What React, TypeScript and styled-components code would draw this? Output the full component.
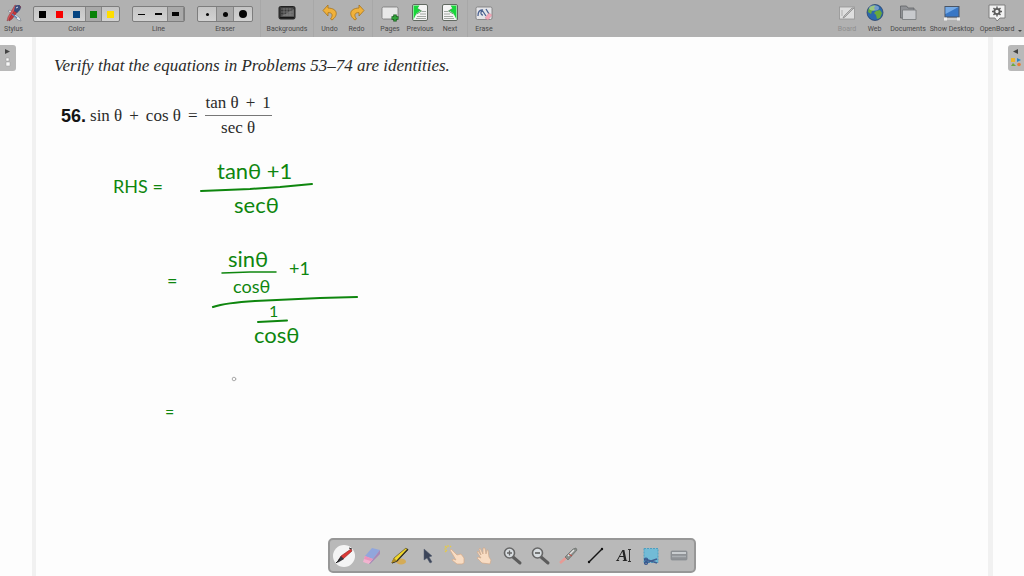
import React from "react";
import styled, { createGlobalStyle } from "styled-components";

const GlobalStyle = createGlobalStyle`
  * { box-sizing: border-box; }
  body { margin: 0; background: #fdfdfd; font-family: Roboto, "Liberation Sans", sans-serif; }
  button { font: inherit; color: inherit; margin: 0; padding: 0; border: 0; background: none; cursor: pointer; }
`;

const Screen = styled.div`
  min-height: 100vh;
  display: flex;
  flex-direction: column;
`;

const Toolbar = styled.header`
  height: 37px;
  display: flex;
  justify-content: space-between;
  background: #b1b1b1;
  color: #4a4a4a;
  font-size: 7px;
  line-height: 10px;
`;

const ToolGroup = styled.div<{ $end?: number }>`
  display: flex;
  padding-right: ${(p) => p.$end ?? 0}px;
  position: relative;
`;

const Section = styled.div`
  display: flex;
  padding: 0 2px;
  border-left: 1px solid #a8a8a8;
`;

const ToolButton = styled.button<{ $width: number; $faded?: boolean }>`
  width: ${(p) => p.$width}px;
  height: 37px;
  padding-top: 3px;
  display: flex;
  flex-direction: column;
  align-items: center;
  gap: 1px;
  white-space: nowrap;
  color: ${(p) => (p.$faded ? "#8f8f8f" : "#4a4a4a")};
  svg { display: block; flex: none; }
`;

const Pickers = styled.div`
  display: flex;
  gap: 12px;
  padding: 6px 7px 0 6px;
`;

const Picker = styled.div`
  display: flex;
  flex-direction: column;
  align-items: center;
  gap: 2px;
`;

const Segments = styled.div`
  display: flex;
  height: 16px;
  border: 1px solid #7d7d7d;
  border-radius: 2px;
  background: linear-gradient(#c4c4c4, #d2d2d2);
  overflow: hidden;
`;

const Segment = styled.button<{ $on?: boolean; $width: number }>`
  width: ${(p) => p.$width}px;
  display: flex;
  align-items: center;
  justify-content: center;
  background: ${(p) => (p.$on ? "#a9a9a9" : "transparent")};
  box-shadow: ${(p) => (p.$on ? "inset 1px 0 #858585, inset -1px 0 #858585" : "none")};
`;

const Mark = styled.span<{ $w: number; $h: number; $color?: string; $round?: boolean }>`
  width: ${(p) => p.$w}px;
  height: ${(p) => p.$h}px;
  background: ${(p) => p.$color ?? "#050505"};
  border-radius: ${(p) => (p.$round ? "50%" : "0")};
`;

const MenuArrow = styled.span`
  position: absolute;
  right: 2px;
  bottom: 5px;
  border: 2px solid transparent;
  border-top-color: #444;
  border-bottom: 0;
`;

const Board = styled.main`
  flex: 1;
  position: relative;
  display: flex;
  padding: 0 31px 0 32px;
`;

const Page = styled.article`
  flex: 1;
  border: solid #f1f1f1;
  border-width: 0 5px 0 4px;
  padding: 17px 18px 80px;
  font-family: "Liberation Serif", serif;
  font-size: 17px;
  line-height: 24px;
  color: #2b2b2b;
`;

const Instruction = styled.p`
  margin: 0;
  font-style: italic;
`;

const Problem = styled.div`
  display: flex;
  align-items: center;
  gap: 4px;
  margin-top: 13px;
  padding-left: 7px;
  white-space: nowrap;
`;

const ProblemNumber = styled.b`
  font-family: "Liberation Sans", sans-serif;
  font-size: 18px;
  color: #151515;
`;

const Terms = styled.span`
  display: flex;
  align-items: center;
  gap: 7px;
`;

const Fraction = styled.span`
  display: flex;
  flex-direction: column;
  text-align: center;
`;

const Numerator = styled(Terms)`
  padding: 0 1px;
  border-bottom: 1px solid #777;
`;

const SideTab = styled.button<{ $side: "left" | "right" }>`
  position: absolute;
  top: 8px;
  ${(p) => p.$side}: 0;
  width: 16px;
  height: 26px;
  background: #b9b9b9;
  border-radius: ${(p) => (p.$side === "left" ? "0 3px 3px 0" : "3px 0 0 3px")};
  svg { display: block; }
`;

const Ink = styled.span<{ $x: number; $y: number; $size: number }>`
  position: absolute;
  left: ${(p) => p.$x}px;
  top: ${(p) => p.$y}px;
  font-family: Lato, sans-serif;
  font-size: ${(p) => p.$size}px;
  line-height: 24px;
  color: #0e860e;
  white-space: pre;
`;

const Strokes = styled.svg`
  position: absolute;
  left: 0;
  top: 0;
  pointer-events: none;
`;

const Palette = styled.nav`
  position: fixed;
  bottom: 3px;
  left: 50%;
  transform: translateX(-50%);
  display: flex;
  height: 35px;
  border: 2px solid #979797;
  border-radius: 5px;
  background: #b9b9b9;
`;

const PaletteButton = styled.button<{ $on?: boolean }>`
  width: 28px;
  display: flex;
  align-items: center;
  justify-content: center;
  svg { display: block; border-radius: 50%; background: ${(p) => (p.$on ? "#f4f4f4" : "none")}; overflow: visible; }
`;

const Icon = ({ children }: { children: React.ReactNode }) => (
  <svg width="20" height="20" viewBox="0 0 20 20" fill="none" aria-hidden="true">{children}</svg>
);

const icons = {
  stylus: (
    <Icon>
      <path d="M4 8l2-1 10 8 1 3-3-1z" fill="#e3e8ef" stroke="#7c8590" strokeWidth=".7" />
      <path d="M11 2l2 1-7 13-3 2 1-4z" fill="#d8575a" stroke="#8a3a40" strokeWidth=".5" />
      <path d="M15 2l2 2-9 12-3 2 1-4z" fill="#c5353a" stroke="#7d2b31" strokeWidth=".5" />
      <path d="M11 3c4-2.500 7 0 5 4l-3 3-3-2z" fill="#3b4d7c" />
      <path d="M12 5l2-1" stroke="#d5dcec" />
      <path d="M8 11l5 4" stroke="#5b86b8" strokeWidth="1.500" />
    </Icon>
  ),
  backgrounds: (
    <Icon>
      <rect x="2" y="3.500" width="16" height="12.500" rx="1.500" fill="#3b3b3b" stroke="#222" />
      <path d="M3 14L17 6v8z" fill="#6a6a6a" />
      <path d="M4 6h12M4 9h12M4 12h12M7 5v8M10 5v8M13 5v8" stroke="#898989" strokeWidth=".6" />
      <path d="M3 14.500h14" stroke="#161616" strokeWidth="1.500" />
    </Icon>
  ),
  undo: (
    <Icon>
      <path d="M8 2L3 7.500 8 13V9.700c4-.4 5.500 2.300 2.500 6.300l1.500 1c6-4 6.500-11.500-4-12z" fill="#f0b13b" stroke="#a77319" strokeWidth=".8" strokeLinejoin="round" />
    </Icon>
  ),
  redo: (
    <Icon>
      <path d="M12 2l5 5.500-5 5.500V9.700c-4-.4-5.500 2.300-2.500 6.300L8 17C2 13 1.500 5.500 12 5z" fill="#f0b13b" stroke="#a77319" strokeWidth=".8" strokeLinejoin="round" />
    </Icon>
  ),
  pages: (
    <Icon>
      <rect x="2" y="4" width="16" height="12" rx="1.500" fill="#e8e8e8" stroke="#777" strokeWidth=".8" />
      <path d="M15 11.500v7M11.500 15h7" stroke="#135c18" strokeWidth="3.400" />
      <path d="M15 12.200v5.600M12.200 15h5.600" stroke="#31a33a" strokeWidth="1.800" />
    </Icon>
  ),
  previous: (
    <Icon>
      <rect x="2.500" y="1.500" width="15" height="16" rx="1.500" fill="#f4f4f4" stroke="#606860" />
      <path d="M3.500 2.500h6l-2 3 3 2-4 3-3 6z" fill="#18d63a" />
      <path d="M7.500 5.500l4 2.500-5 3" stroke="#3d8048" strokeWidth=".8" />
      <path d="M12 8.500h4M10 11h6M7 13.500h9M6 15.500h10" stroke="#8d948d" strokeWidth=".8" />
    </Icon>
  ),
  next: (
    <Icon>
      <rect x="2.500" y="1.500" width="15" height="16" rx="1.500" fill="#f4f4f4" stroke="#606860" />
      <path d="M16.500 2.500h-6l2 3-3 2 4 3 3 6z" fill="#18d63a" />
      <path d="M12.500 5.500l-4 2.500 5 3" stroke="#3d8048" strokeWidth=".8" />
      <path d="M4 8.500h4M4 11h6M4 13.500h9M4 15.500h10" stroke="#8d948d" strokeWidth=".8" />
    </Icon>
  ),
  erase: (
    <Icon>
      <rect x="2" y="4" width="16" height="12.500" rx="1.500" fill="#e5e5e8" stroke="#777" strokeWidth=".8" />
      <path d="M4 13c0-4 2-6 4-6-2 3-1 5 1 5M8 7l4 6M12 6l3 5" stroke="#4a6190" strokeWidth="1.300" />
      <path d="M11 15l4-5 3 2-4 5z" fill="#f4a7b8" stroke="#c88292" strokeWidth=".4" />
    </Icon>
  ),
  board: (
    <Icon>
      <rect x="2.500" y="4" width="15" height="12" fill="#dedede" stroke="#949494" strokeWidth=".8" />
      <path d="M5 7v6" stroke="#b0b0b0" />
      <path d="M17 5L8 14l-2 1 1-2 8-8z" fill="#bcbcbc" stroke="#858585" strokeWidth=".7" />
    </Icon>
  ),
  web: (
    <Icon>
      <circle cx="10" cy="9.500" r="8" fill="#2c67ad" stroke="#213b62" strokeWidth=".7" />
      <path d="M3.500 6c2-3 5-4 7-3.500L9 5l1 2-3 1-1 3-3-2zM11 8l4-1 2 3-2 5-3 1-1-4-2-2z" fill="#68a83c" />
      <ellipse cx="9" cy="5" rx="5" ry="2.800" fill="#fff" opacity=".35" />
    </Icon>
  ),
  documents: (
    <Icon>
      <path d="M2.500 3h6l1.500 2h6v10H2.500z" fill="#909296" stroke="#606266" strokeWidth=".8" />
      <path d="M4.500 7h13.500v9.500H4.500z" fill="#c8cacd" stroke="#74777a" strokeWidth=".8" />
    </Icon>
  ),
  desktop: (
    <Icon>
      <rect x="3" y="3.500" width="14" height="10.500" fill="#3977c5" stroke="#4a5564" />
      <path d="M3.500 4h13L3.500 11z" fill="#76aae5" />
      <path d="M2 14.500h3v3H2zM15 14.500h3v3h-3zM5 15.500h10v1H5z" fill="#f0f0f0" />
    </Icon>
  ),
  openboard: (
    <Icon>
      <path d="M2 2h16v13h-5l-3 3-2-3H2z" fill="#f2f2f2" stroke="#777" strokeWidth=".9" />
      <circle cx="10" cy="8.500" r="2.600" stroke="#5a5a5a" strokeWidth="1.800" />
      <path d="M10 3.500v2M10 11.500v2M5 8.500h2M13 8.500h2M6.500 5l1.400 1.400M12.100 10.600l1.400 1.400M6.500 12l1.400-1.400M12.100 6.400L13.500 5" stroke="#5a5a5a" strokeWidth="1.400" />
    </Icon>
  ),
};

const PIcon = ({ children }: { children: React.ReactNode }) => (
  <svg width="22" height="22" viewBox="0 0 22 22" fill="none" aria-hidden="true">{children}</svg>
);

const lens = (
  <>
    <path d="M12 12l7 6" stroke="#5c5c5c" strokeWidth="3" strokeLinecap="round" />
    <circle cx="8.500" cy="8" r="5" fill="#d8dde0" stroke="#666" strokeWidth="1.600" />
  </>
);

const paletteTools: { name: string; art: React.ReactNode }[] = [
  { name: "Pen", art: (
    <PIcon>
      <path d="M18 4l1 2-9 8-4 1 2-4z" fill="#dc3935" stroke="#872120" strokeWidth=".6" />
      <path d="M8 11l3 3-5 3-2 1 1-3z" fill="#38383e" />
      <path d="M3 18l4-4" stroke="#202020" /><path d="M16 3l3 1" stroke="#333" />
    </PIcon>
  ) },
  { name: "Eraser", art: (
    <PIcon>
      <path d="M4 11l8 3-4 5-6-2z" fill="#f2b3cf" />
      <path d="M11 3l8 2-7 9-8-3z" fill="#91a6dc" />
      <path d="M19 5v4L9 19l-1 0 4-5z" fill="#a888b8" />
      <path d="M4 11l8 3-2 2-7-2z" fill="#ea93bb" />
    </PIcon>
  ) },
  { name: "Highlighter", art: (
    <PIcon>
      <ellipse cx="12" cy="16.500" rx="5" ry="3" fill="#dda735" opacity=".75" />
      <path d="M17 3l2 2L8 16l-5 2 2-5z" fill="#f1d72b" stroke="#5a5022" strokeWidth=".7" />
      <path d="M19 4L8 16l-5 2" stroke="#33302a" strokeWidth="1.300" />
      <path d="M2 18l3-5 3 3z" fill="#b08c20" />
    </PIcon>
  ) },
  { name: "Select", art: <PIcon><path d="M7 4l8 7-3 1 3 5-2 1-3-5-3 2z" fill="#3c4559" stroke="#555f71" strokeWidth=".5" /></PIcon> },
  { name: "Interact", art: (
    <PIcon>
      <path d="M5 5l1-1 6 6 4-1 3 4v5l-2 1h-5l-5-4 1-1 3 1z" fill="#f8dcc3" stroke="#d5aa88" strokeWidth=".7" strokeLinejoin="round" />
      <path d="M3 0v2M-1 4h2M0 1l2 2M6 1L5 2M0 7l2-2" stroke="#e5ca48" strokeWidth="1.200" />
    </PIcon>
  ) },
  { name: "Move", art: (
    <PIcon>
      <path d="M9 18l-5-5 1-1 3 1-4-6 1-1 3 4-2-6 1-1 3 6V3h2l1 6 1-4h1l1 7 2 3-1 4z" fill="#f8dcc3" stroke="#d0a98b" strokeWidth=".7" strokeLinejoin="round" />
    </PIcon>
  ) },
  { name: "Zoom in", art: <PIcon>{lens}<path d="M6 8h5M8.500 5.500v5" stroke="#666" strokeWidth="1.300" /></PIcon> },
  { name: "Zoom out", art: <PIcon>{lens}<path d="M6 8h5" stroke="#555" strokeWidth="1.500" /></PIcon> },
  { name: "Laser pointer", art: (
    <PIcon>
      <path d="M3 18l7-6" stroke="#e79b95" strokeWidth="2.600" />
      <path d="M8 12l8-8 3-1 1 2-9 10z" fill="#8a8f8b" stroke="#5f6462" strokeWidth=".6" />
      <path d="M11 11l6-6" stroke="#e4e4e4" strokeWidth="1.500" />
      <path d="M12 9l3 2" stroke="#c34039" />
    </PIcon>
  ) },
  { name: "Line", art: <PIcon><path d="M4 17L17 4" stroke="#151515" strokeWidth="1.400" /><circle cx="4" cy="17" r="1.200" fill="#111" /><circle cx="17" cy="4" r="1.200" fill="#111" /></PIcon> },
  { name: "Text", art: null },
  { name: "Capture", art: (
    <PIcon>
      <rect x="3" y="3.500" width="14" height="14" fill="#72bbd6" stroke="#4e9fc0" strokeDasharray="2 1" />
      <path d="M4 14l12 4M4 18l12-4" stroke="#425f91" strokeWidth="1.500" />
      <circle cx="5" cy="14.500" r="1.500" stroke="#34558c" strokeWidth="1.200" /><circle cx="5" cy="18" r="1.500" stroke="#34558c" strokeWidth="1.200" />
    </PIcon>
  ) },
  { name: "Virtual keyboard", art: (
    <PIcon>
      <rect x="2" y="6" width="16" height="9" rx="1" fill="#8f9296" stroke="#858a8f" strokeWidth=".7" />
      <path d="M3 8h14" stroke="#c9cdd0" strokeWidth="2" /><path d="M3 11.500h14" stroke="#aaaeb2" strokeWidth="1.500" />
    </PIcon>
  ) },
];

const TextGlyph = styled.span`
  font-family: "Liberation Serif", serif;
  font-size: 17px;
  line-height: 22px;
  color: #222;
  display: flex;
  align-items: center;
  font-weight: 700;
`;

const Caret = styled.span`
  width: 3px;
  height: 13px;
  border: solid #333;
  border-width: 1px 0;
  background: linear-gradient(90deg, transparent 1px, #333 1px 2px, transparent 2px);
`;

const colors = [
  { name: "Black", value: "#000000" },
  { name: "Red", value: "#f80000" },
  { name: "Blue", value: "#044380" },
  { name: "Green", value: "#078207" },
  { name: "Yellow", value: "#ffdd00" },
];

const ink: [number, number, number, string][] = [
  [113, 137, 18, "RHS ="],
  [217, 122, 22, "tanθ +1"],
  [234, 156, 22, "secθ"],
  [167, 231, 18, "="],
  [228, 210, 22, "sinθ"],
  [289, 219, 18, "+1"],
  [233, 237, 18, "cosθ"],
  [269, 262, 16, "1"],
  [254, 286, 22, "cosθ"],
  [165, 363, 16, "="],
];

type ToolProps = { name: string; icon: React.ReactNode; width: number; faded?: boolean };
const Tool = ({ name, icon, width, faded }: ToolProps) => (
  <ToolButton $width={width} $faded={faded} disabled={faded}>{icon}<span>{name}</span></ToolButton>
);

export default function App() {
  return (
    <Screen>
      <GlobalStyle />
      <Toolbar>
        <ToolGroup>
          <Tool name="Stylus" icon={icons.stylus} width={27} />
          <Pickers>
            <Picker>
              <Segments>
                {colors.map((c) => (
                  <Segment key={c.name} $width={17} $on={c.name === "Green"} aria-label={c.name} aria-pressed={c.name === "Green"}>
                    <Mark $w={7} $h={7} $color={c.value} />
                  </Segment>
                ))}
              </Segments>
              <span>Color</span>
            </Picker>
            <Picker>
              <Segments>
                {[1, 2, 4].map((h, i) => (
                  <Segment key={h} $width={17} $on={i === 2} aria-label={`Line width ${h}`} aria-pressed={i === 2}>
                    <Mark $w={7} $h={h} />
                  </Segment>
                ))}
              </Segments>
              <span>Line</span>
            </Picker>
            <Picker>
              <Segments>
                {[3, 5, 8].map((d, i) => (
                  <Segment key={d} $width={18} $on={i === 1} aria-label={`Eraser size ${d}`} aria-pressed={i === 1}>
                    <Mark $w={d} $h={d} $round />
                  </Segment>
                ))}
              </Segments>
              <span>Eraser</span>
            </Picker>
          </Pickers>
          <Section><Tool name="Backgrounds" icon={icons.backgrounds} width={48} /></Section>
          <Section>
            <Tool name="Undo" icon={icons.undo} width={27} />
            <Tool name="Redo" icon={icons.redo} width={27} />
          </Section>
          <Section>
            <Tool name="Pages" icon={icons.pages} width={30} />
            <Tool name="Previous" icon={icons.previous} width={30} />
            <Tool name="Next" icon={icons.next} width={30} />
          </Section>
          <Section><Tool name="Erase" icon={icons.erase} width={28} /></Section>
        </ToolGroup>
        <ToolGroup $end={5}>
          <Tool name="Board" icon={icons.board} width={30} faded />
          <Tool name="Web" icon={icons.web} width={25} />
          <Tool name="Documents" icon={icons.documents} width={42} />
          <Tool name="Show Desktop" icon={icons.desktop} width={46} />
          <Tool name="OpenBoard" icon={icons.openboard} width={44} />
          <MenuArrow />
        </ToolGroup>
      </Toolbar>
      <Board>
        <Page>
          <Instruction>Verify that the equations in Problems 53–74 are identities.</Instruction>
          <Problem>
            <ProblemNumber>56.</ProblemNumber>
            <Terms>
              <span>sin θ</span>
              <span>+</span>
              <span>cos θ</span>
              <span>=</span>
              <Fraction>
                <Numerator>
                  <span>tan θ</span>
                  <span>+</span>
                  <span>1</span>
                </Numerator>
                <span>sec θ</span>
              </Fraction>
            </Terms>
          </Problem>
        </Page>
        <Strokes width="400" height="380" fill="none" stroke="#0e860e" strokeWidth="2" strokeLinecap="round" aria-hidden="true">
          <path d="M201 154L250 152L280 150L312 147" />
          <path d="M222 236L250 235L276 235" strokeWidth="1.500" />
          <path d="M213 270C225 266 238 265 255 264L320 261L357 260" strokeWidth="2.200" />
          <path d="M258 285L287 283.500" />
          <circle cx="234" cy="342" r="1.800" stroke="#aaa" strokeWidth="1" />
        </Strokes>
        {ink.map(([x, y, size, text]) => (
          <Ink key={`${x}-${y}`} $x={x} $y={y} $size={size}>{text}</Ink>
        ))}
        <SideTab $side="left" aria-label="Show pages panel">
          <svg width="16" height="26" viewBox="0 0 16 26">
            <path d="M5 4l5 2.500-5 2.500z" fill="#444" />
            <path d="M6 13h3v3H6zM6 17h4v4H6z" fill="#f7f7f7" stroke="#999" strokeWidth=".5" />
          </svg>
        </SideTab>
        <SideTab $side="right" aria-label="Show library panel">
          <svg width="16" height="26" viewBox="0 0 16 26">
            <path d="M10 4L5 6.500 10 9z" fill="#444" />
            <path d="M3 13h4v4H3z" fill="#ecb52c" /><path d="M9 13l4 2-4 2z" fill="#2d84c8" />
            <path d="M3 21l2-3 3 3z" fill="#6da843" /><circle cx="11" cy="19.500" r="1.800" fill="#e97b37" />
          </svg>
        </SideTab>
      </Board>
      <Palette aria-label="Drawing tools">
        {paletteTools.map((t, i) => (
          <PaletteButton key={t.name} $on={i === 0} aria-label={t.name} aria-pressed={i === 0}>
            {t.art ?? <TextGlyph><i>A</i><Caret /></TextGlyph>}
          </PaletteButton>
        ))}
      </Palette>
    </Screen>
  );
}
